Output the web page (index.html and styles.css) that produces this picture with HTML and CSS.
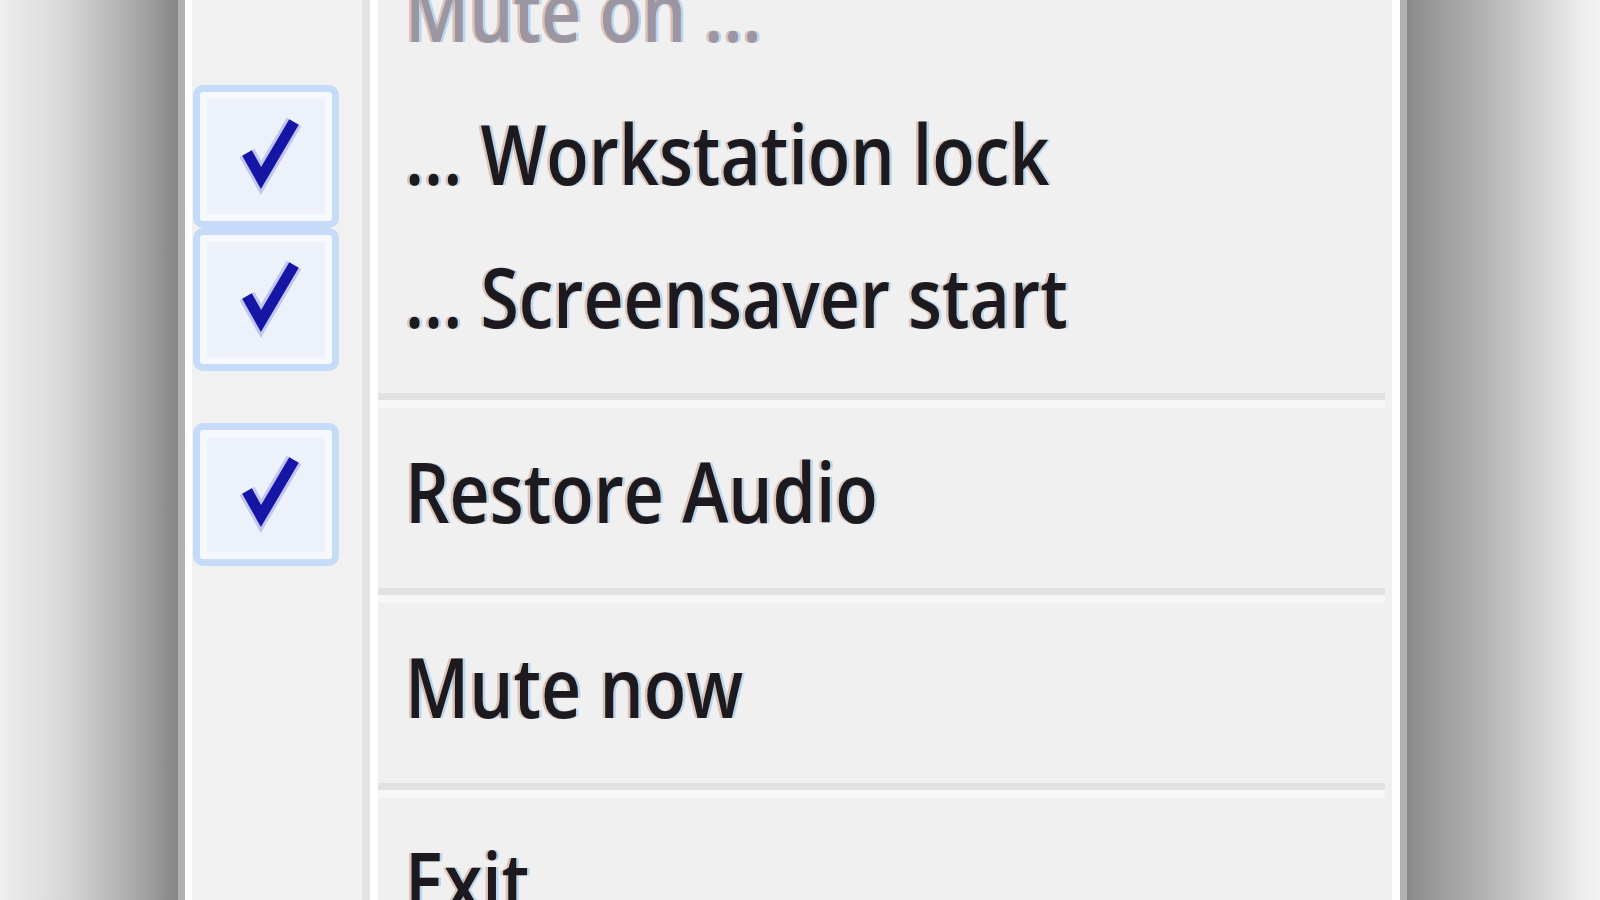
FILE: index.html
```html
<!DOCTYPE html>
<html>
<head>
<meta charset="utf-8">
<link rel="stylesheet" href="styles.css">
</head>
<body>
<div class="desk">
  <div class="shade shade-left"></div>
  <div class="menu">
    <div class="menu-inner">
      <div class="row first">
        <div class="gutter"></div><div class="vsep"></div>
        <div class="label disabled"><span>Mute on ...</span></div>
      </div>
      <div class="row">
        <div class="gutter"><div class="check"><svg viewBox="0 0 146 143" width="146" height="143"><path class="tick-halo" d="M54 68 L68 93 L101 37"/><path class="tick" d="M54 68 L68 93 L101 37"/></svg></div></div><div class="vsep"></div>
        <div class="label"><span>... Workstation lock</span></div>
      </div>
      <div class="row">
        <div class="gutter"><div class="check"><svg viewBox="0 0 146 143" width="146" height="143"><path class="tick-halo" d="M54 68 L68 93 L101 37"/><path class="tick" d="M54 68 L68 93 L101 37"/></svg></div></div><div class="vsep"></div>
        <div class="label"><span>... Screensaver start</span></div>
      </div>
      <div class="sep-row">
        <div class="gutter"></div><div class="vsep"></div>
        <div class="sep"><div class="line"></div></div>
      </div>
      <div class="row">
        <div class="gutter"><div class="check"><svg viewBox="0 0 146 143" width="146" height="143"><path class="tick-halo" d="M54 68 L68 93 L101 37"/><path class="tick" d="M54 68 L68 93 L101 37"/></svg></div></div><div class="vsep"></div>
        <div class="label"><span>Restore Audio</span></div>
      </div>
      <div class="sep-row">
        <div class="gutter"></div><div class="vsep"></div>
        <div class="sep"><div class="line"></div></div>
      </div>
      <div class="row">
        <div class="gutter"></div><div class="vsep"></div>
        <div class="label"><span>Mute now</span></div>
      </div>
      <div class="sep-row">
        <div class="gutter"></div><div class="vsep"></div>
        <div class="sep"><div class="line"></div></div>
      </div>
      <div class="row">
        <div class="gutter"></div><div class="vsep"></div>
        <div class="label"><span>Exit</span></div>
      </div>
    </div>
  </div>
  <div class="shade shade-right"></div>
</div>
</body>
</html>
```
FILE: styles.css
```css
html, body {
  margin: 0;
  padding: 0;
  background: #f0f0f0;
}
.desk {
  display: flex;
  width: 1600px;
  height: 900px;
  overflow: hidden;
}
.shade-left {
  width: 178px;
  flex: none;
  background: linear-gradient(to right, #f0f0f0 0px, #e8e8e8 15px, #e1e1e1 40px, #d4d4d4 70px, #c4c4c4 95px, #b4b4b4 120px, #a2a2a2 145px, #959595 160px, #8a8a8a 170px, #888888 178px);
}
.shade-right {
  width: 193px;
  flex: none;
  background: linear-gradient(to right, #878787 0px, #8f8f8f 8px, #969696 20px, #a2a2a2 43px, #b2b2b2 76px, #c4c4c4 105px, #d2d2d2 128px, #dedede 150px, #e8e8e8 165px, #efefef 180px, #f2f2f2 193px);
}
.menu {
  width: 1229px;
  flex: none;
  border-left: 7px solid #b1b1b1;
  border-right: 7px solid #b1b1b1;
  box-sizing: border-box;
  overflow: hidden;
}
.menu-inner {
  border-left: 7px solid #ffffff;
  border-right: 8px solid #fdfdfd;
  background: #f0f0f0;
  display: flex;
  flex-direction: column;
  height: 100%;
}
.row, .sep-row {
  display: flex;
  flex: none;
}
.row { height: 143px; }
.row.first { margin-top: -58px; }
.sep-row { height: 52px; }
.gutter {
  width: 170px;
  flex: none;
  background: #f1f1f1;
  display: flex;
  align-items: stretch;
}
.vsep {
  width: 8px;
  flex: none;
  border-left: 8px solid #e4e4e4;
  background: #ffffff;
}
.check {
  width: 146px;
  height: 143px;
  margin-left: 1px;
  box-sizing: border-box;
  border: 7px solid #c6dbf7;
  border-radius: 10px;
  background: #ecf1fa;
  box-shadow: inset 0 0 0 7px #f5f8fd;
}
.check svg {
  display: block;
  margin: -7px 0 0 -7px;
}
.tick, .tick-halo {
  fill: none;
  stroke-linejoin: miter;
  stroke-linecap: butt;
}
.tick {
  stroke: #1515a6;
  stroke-width: 11px;
}
.tick-halo {
  stroke: #9da2e2;
  stroke-width: 17px;
  opacity: 0.55;
}
.label {
  flex: 1;
  display: flex;
  align-items: center;
  padding-left: 27px;
  padding-bottom: 8px;
  box-sizing: border-box;
  font-family: "Open Sans", "Noto Sans", sans-serif;
  font-size: 84px;
  font-weight: 600;
  line-height: 1;
  color: #1c1a1e;
  white-space: nowrap;
}
.label span {
  display: inline-block;
  transform: scaleX(0.83);
  transform-origin: left center;
  text-shadow: -3px 0 rgba(190, 110, 70, 0.35), 3px 0 rgba(80, 170, 240, 0.35);
}
.label.disabled { color: #9c95a2; }
.sep {
  flex: 1;
  padding-top: 22px;
  margin-right: 7px;
}
.sep .line {
  height: 7px;
  background: #e1e1e1;
  border-bottom: 8px solid #f7f7f7;
}
```
